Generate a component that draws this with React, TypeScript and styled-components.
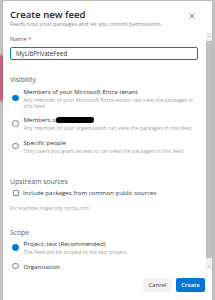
import { createGlobalStyle, styled } from 'styled-components';

const GlobalStyle = createGlobalStyle`
  html, body {
    margin: 0;
    padding: 0;
  }
  body {
    background: #c9c9c9;
    font-family: "Open Sans", "Noto Sans", sans-serif;
    -webkit-font-smoothing: antialiased;
  }
`;

type Option = { id: string; label: string; description?: string; redacted?: boolean };

const visibilityOptions: Option[] = [
  {
    id: 'tenant',
    label: 'Members of your Microsoft Entra tenant',
    description: 'Any member of your Microsoft Entra tenant can view the packages in this feed',
  },
  {
    id: 'org',
    label: 'Members of',
    description: 'Any member of your organization can view the packages in this feed',
    redacted: true,
  },
  {
    id: 'people',
    label: 'Specific people',
    description: 'Only users you grant access to can view the packages in this feed',
  },
];

const scopeOptions: Option[] = [
  {
    id: 'project',
    label: 'Project: test (Recommended)',
    description: 'The feed will be scoped to the test project.',
  },
  { id: 'organization', label: 'Organization' },
];

const App: React.FC = () => {
  return (
    <>
      <GlobalStyle />
      <Page>
        <Gutter />
        <Dialog>
          <Header>
            <TitleRow>
              <Title>Create new feed</Title>
              <CloseButton aria-label="Close">
                <svg width="6" height="6" viewBox="0 0 6 6">
                  <path d="M0.5 0.5 5.5 5.5 M5.5 0.5 0.5 5.5" stroke="#666" strokeWidth="0.8" />
                </svg>
              </CloseButton>
            </TitleRow>
            <Subtitle>Feeds host your packages and let you control permissions.</Subtitle>
          </Header>

          <Body>
            <Content>
              <FieldLabel>
                Name <Required>*</Required>
              </FieldLabel>
              <TextInput defaultValue="MyLibPrivateFeed" />

              <SectionTitle $top={16}>Visibility</SectionTitle>
              <OptionList>
                {visibilityOptions.map((o) => (
                  <RadioRow key={o.id}>
                    <Radio $checked={o.id === 'tenant'} />
                    <OptionText>
                      <OptionLabel>
                        {o.label}
                        {o.redacted && <Redaction />}
                      </OptionLabel>
                      {o.description && <OptionHint>{o.description}</OptionHint>}
                    </OptionText>
                  </RadioRow>
                ))}
              </OptionList>

              <SectionTitle $top={24}>Upstream sources</SectionTitle>
              <CheckRow>
                <Checkbox />
                <OptionLabel>Include packages from common public sources</OptionLabel>
              </CheckRow>
              <Example>For example: nuget.org, npmjs.com</Example>

              <SectionTitle $top={18}>Scope</SectionTitle>
              <OptionList>
                {scopeOptions.map((o) => (
                  <RadioRow key={o.id}>
                    <Radio $checked={o.id === 'project'} />
                    <OptionText>
                      <OptionLabel>{o.label}</OptionLabel>
                      {o.description && <OptionHint>{o.description}</OptionHint>}
                    </OptionText>
                  </RadioRow>
                ))}
              </OptionList>
            </Content>

            <ScrollTrack>
              <ScrollArrow $dir="up" />
              <ScrollThumb />
              <ScrollArrow $dir="down" />
            </ScrollTrack>
          </Body>

          <Footer>
            <Button>Cancel</Button>
            <Button $primary>Create</Button>
          </Footer>
        </Dialog>
      </Page>
    </>
  );
};

export default App;

// Styled Components
const Page = styled.div`
  display: flex;
  height: 300px;
  overflow: hidden;
  padding-top: 1px;
  box-sizing: border-box;
`;

const Gutter = styled.div`
  width: 3px;
  flex: none;
  background: linear-gradient(
    to bottom,
    #c9c9c9 0,
    #c9c9c9 52px,
    #c56a82 56px,
    #c56a82 98px,
    #c9c9c9 102px
  );
`;

const Dialog = styled.div`
  width: 209px;
  height: 310px;
  flex: none;
  display: flex;
  flex-direction: column;
  background: #fff;
  border-radius: 2px 2px 0 0;
  box-shadow: 0 0 4px rgba(0, 0, 0, 0.2);
`;

const Header = styled.div`
  padding: 8px 7px 0 7px;
`;

const TitleRow = styled.div`
  display: flex;
  align-items: center;
  justify-content: space-between;
`;

const Title = styled.h1`
  margin: 0;
  font-size: 9.6px;
  line-height: 12px;
  font-weight: 600;
  color: #201f1e;
`;

const CloseButton = styled.span`
  display: flex;
  margin-right: 10px;
  margin-top: 1px;
`;

const Subtitle = styled.p`
  margin: 0;
  font-size: 5.6px;
  line-height: 7px;
  color: #8a8886;
`;

const Body = styled.div`
  display: flex;
  height: 241px;
  margin-top: 4px;
`;

const Content = styled.div`
  flex: 1;
  min-width: 0;
  overflow: hidden;
  padding: 3px 8px 0 7px;
`;

const ScrollTrack = styled.div`
  width: 6px;
  flex: none;
  display: flex;
  flex-direction: column;
  margin: 1px 0 3px;
  background: #f1f1f1;
`;

const ScrollArrow = styled.div<{ $dir: 'up' | 'down' }>`
  height: 7px;
  flex: none;
  display: flex;
  align-items: center;
  justify-content: center;

  &::before {
    content: '';
    border-left: 1.5px solid transparent;
    border-right: 1.5px solid transparent;
    ${(p) =>
      p.$dir === 'up' ? 'border-bottom: 1.5px solid #8a8a8a;' : 'border-top: 1.5px solid #8a8a8a;'}
  }
`;

const ScrollThumb = styled.div`
  flex: 1;
  margin: 1px 0 5px;
  background: #c1c1c1;
`;

const FieldLabel = styled.div`
  font-size: 6px;
  line-height: 8px;
  color: #605e5c;
`;

const Required = styled.span`
  color: #d13438;
`;

const TextInput = styled.input`
  display: block;
  width: 100%;
  height: 13px;
  margin-top: 4px;
  box-sizing: border-box;
  border: 1px solid #0078d4;
  border-radius: 2px;
  padding: 0 5px;
  font-family: inherit;
  font-size: 6.2px;
  color: #323130;
  outline: none;
`;

const SectionTitle = styled.div<{ $top: number }>`
  margin-top: ${(p) => p.$top}px;
  font-size: 6.8px;
  line-height: 8px;
  color: #605e5c;
`;

const OptionList = styled.div`
  display: flex;
  flex-direction: column;
  gap: 7.5px;
  margin-top: 3.5px;
`;

const RadioRow = styled.div`
  display: flex;
  align-items: center;
  gap: 5px;
  padding-left: 2px;
`;

const Radio = styled.span<{ $checked?: boolean }>`
  width: 6.5px;
  height: 6.5px;
  flex: none;
  box-sizing: border-box;
  border-radius: 50%;
  border: 0.8px solid ${(p) => (p.$checked ? '#0078d4' : '#8a8886')};
  background: ${(p) => (p.$checked ? '#0078d4' : '#fff')};
`;

const OptionText = styled.div`
  flex: 1;
  min-width: 0;
  display: flex;
  flex-direction: column;
  gap: 2px;
`;

const OptionLabel = styled.div`
  display: flex;
  align-items: center;
  font-size: 6.1px;
  line-height: 7px;
  color: #323130;
  white-space: nowrap;
`;

const Redaction = styled.span`
  width: 38px;
  height: 6px;
  margin-left: -2px;
  border-radius: 3px 2px 3px 2px;
  background: #000;
`;

const OptionHint = styled.div`
  font-size: 5.3px;
  line-height: 6px;
  color: #a19f9d;
`;

const CheckRow = styled.div`
  display: flex;
  align-items: center;
  gap: 4px;
  margin-top: 3.5px;
  padding-left: 3px;
`;

const Checkbox = styled.span`
  width: 6px;
  height: 6px;
  flex: none;
  box-sizing: border-box;
  border: 0.8px solid #8a8886;
  border-radius: 1px;
`;

const Example = styled.div`
  margin-top: 8.5px;
  font-size: 4.8px;
  line-height: 6px;
  color: #a19f9d;
`;

const Footer = styled.div`
  display: flex;
  justify-content: flex-end;
  gap: 4px;
  padding: 5px 7px 0 0;
`;

const Button = styled.button<{ $primary?: boolean }>`
  width: 29px;
  height: 14px;
  padding: 0;
  border: none;
  border-radius: 2px;
  font-family: inherit;
  font-size: 5.8px;
  font-weight: ${(p) => (p.$primary ? 600 : 400)};
  color: ${(p) => (p.$primary ? '#fff' : '#323130')};
  background: ${(p) => (p.$primary ? '#0078d4' : '#f3f2f1')};
`;
